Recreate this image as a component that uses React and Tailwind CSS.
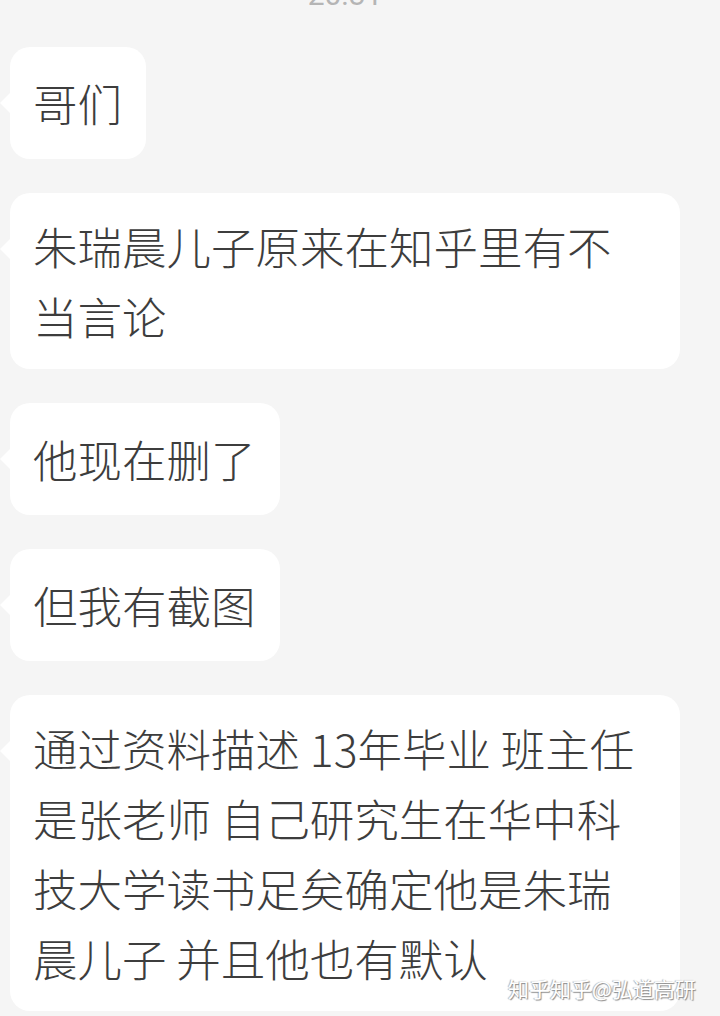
import React from "react";

const Bubble = ({ lines, wide }) => (
  <div
    className={`relative ml-[10px] flex min-h-[112px] items-center rounded-[20px] bg-white py-[18px] pl-[23px] pr-[24px] ${
      wide ? "w-[670px]" : "self-start"
    }`}
  >
    <div className="absolute left-[-10px] top-[46px] h-0 w-0 border-y-[10px] border-r-[10px] border-y-transparent border-r-white" />
    <div className="text-[44.5px] font-light leading-[70px] text-[#3d3d3d] whitespace-nowrap">
      {lines.map((l, i) => (
        <div key={i}>{l}</div>
      ))}
    </div>
  </div>
);

export default function App() {
  return (
    <div
      className="relative h-[1016px] w-[720px] overflow-hidden bg-[#f5f5f5]"
      style={{ fontFamily: '"Noto Sans CJK SC", "Noto Sans", sans-serif' }}
    >
      <div className="flex justify-center pr-[30px]">
        <div
          className="mt-[-20px] text-[30px] leading-[30px] text-[#b5b5b5]"
          style={{ fontFamily: 'Roboto, "Noto Sans", sans-serif' }}
        >
          20:31
        </div>
      </div>
      <div className="mt-[37px] flex flex-col gap-[34px]">
        <Bubble lines={["哥们"]} />
        <Bubble wide lines={["朱瑞晨儿子原来在知乎里有不", "当言论"]} />
        <Bubble lines={["他现在删了"]} />
        <Bubble lines={["但我有截图"]} />
        <Bubble
          wide
          lines={[
            "通过资料描述 13年毕业 班主任",
            "是张老师 自己研究生在华中科",
            "技大学读书足矣确定他是朱瑞",
            "晨儿子 并且他也有默认",
          ]}
        />
      </div>
      <div
        className="absolute left-[508px] top-[976px] whitespace-nowrap text-[21px] leading-[24px] text-white"
        style={{ textShadow: "1px 1px 1px #8a8a8a, -1px 0 1px #b0b0b0" }}
      >
        知乎知乎@弘道高研
      </div>
    </div>
  );
}
